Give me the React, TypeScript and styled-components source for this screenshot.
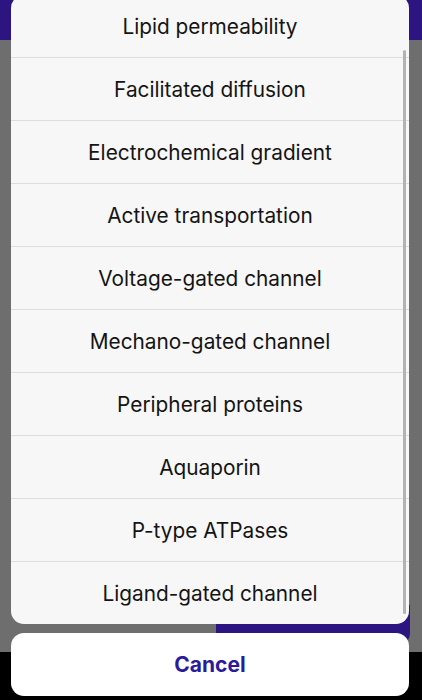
import styled, { createGlobalStyle } from 'styled-components';

const GlobalStyle = createGlobalStyle`
html, body {
  margin: 0;
  padding: 0;
  background: #000;
}
* {
  box-sizing: border-box;
}
`;

const Screen = styled.div`
position: relative;
width: 422px;
height: 700px;
overflow: hidden;
font-family: Inter, "Liberation Sans", Arial, sans-serif;
`;

const Backdrop = styled.div`
display: flex;
flex-direction: column;
height: 100%;
`;

const TopBar = styled.div`
height: 40px;
background-color: #2d1581;
`;

const Dimmed = styled.div`
flex: 1;
display: flex;
flex-direction: column;
justify-content: flex-end;
align-items: flex-end;
padding: 0 12px 7px 0;
background-color: #6e6e6e;
`;

const HiddenButton = styled.div`
width: 194px;
height: 40px;
background-color: #2d1581;
border-radius: 0 0 12px 12px;
`;

const BottomBar = styled.div`
height: 48px;
background-color: #000;
`;

const Overlay = styled.div`
position: absolute;
inset: 0;
display: flex;
flex-direction: column;
justify-content: flex-end;
gap: 9px;
padding: 0 13px 4px 11px;
`;

const Sheet = styled.div`
position: relative;
background-color: #f7f7f7;
border-radius: 13px;
overflow: hidden;
flex-shrink: 0;
`;

const OptionRow = styled.div<{ last: boolean }>`
height: ${(props) => (props.last ? '62px' : '63px')};
display: flex;
align-items: center;
justify-content: center;
padding-top: 1px;
font-size: 20.8px;
color: #141414;
border-bottom: ${(props) => (props.last ? 'none' : '1px solid #dedede')};
`;

const ScrollBar = styled.div`
position: absolute;
right: 3px;
top: 55px;
bottom: 10px;
width: 3px;
border-radius: 2px;
background-color: #b3b3b3;
`;

const CancelButton = styled.div`
height: 63px;
display: flex;
align-items: center;
justify-content: center;
background-color: #ffffff;
border-radius: 13px;
font-size: 21px;
font-weight: 700;
color: #2b1a9c;
flex-shrink: 0;
`;

const options = [
    'Lipid permeability',
    'Facilitated diffusion',
    'Electrochemical gradient',
    'Active transportation',
    'Voltage-gated channel',
    'Mechano-gated channel',
    'Peripheral proteins',
    'Aquaporin',
    'P-type ATPases',
    'Ligand-gated channel',
];

const App = () => {
    return (
        <Screen>
            <GlobalStyle />
            <Backdrop>
                <TopBar />
                <Dimmed>
                    <HiddenButton />
                </Dimmed>
                <BottomBar />
            </Backdrop>
            <Overlay>
                <Sheet>
                    {options.map((option, i) => (
                        <OptionRow key={option} last={i === options.length - 1}>
                            {option}
                        </OptionRow>
                    ))}
                    <ScrollBar />
                </Sheet>
                <CancelButton>Cancel</CancelButton>
            </Overlay>
        </Screen>
    );
};

export default App;
